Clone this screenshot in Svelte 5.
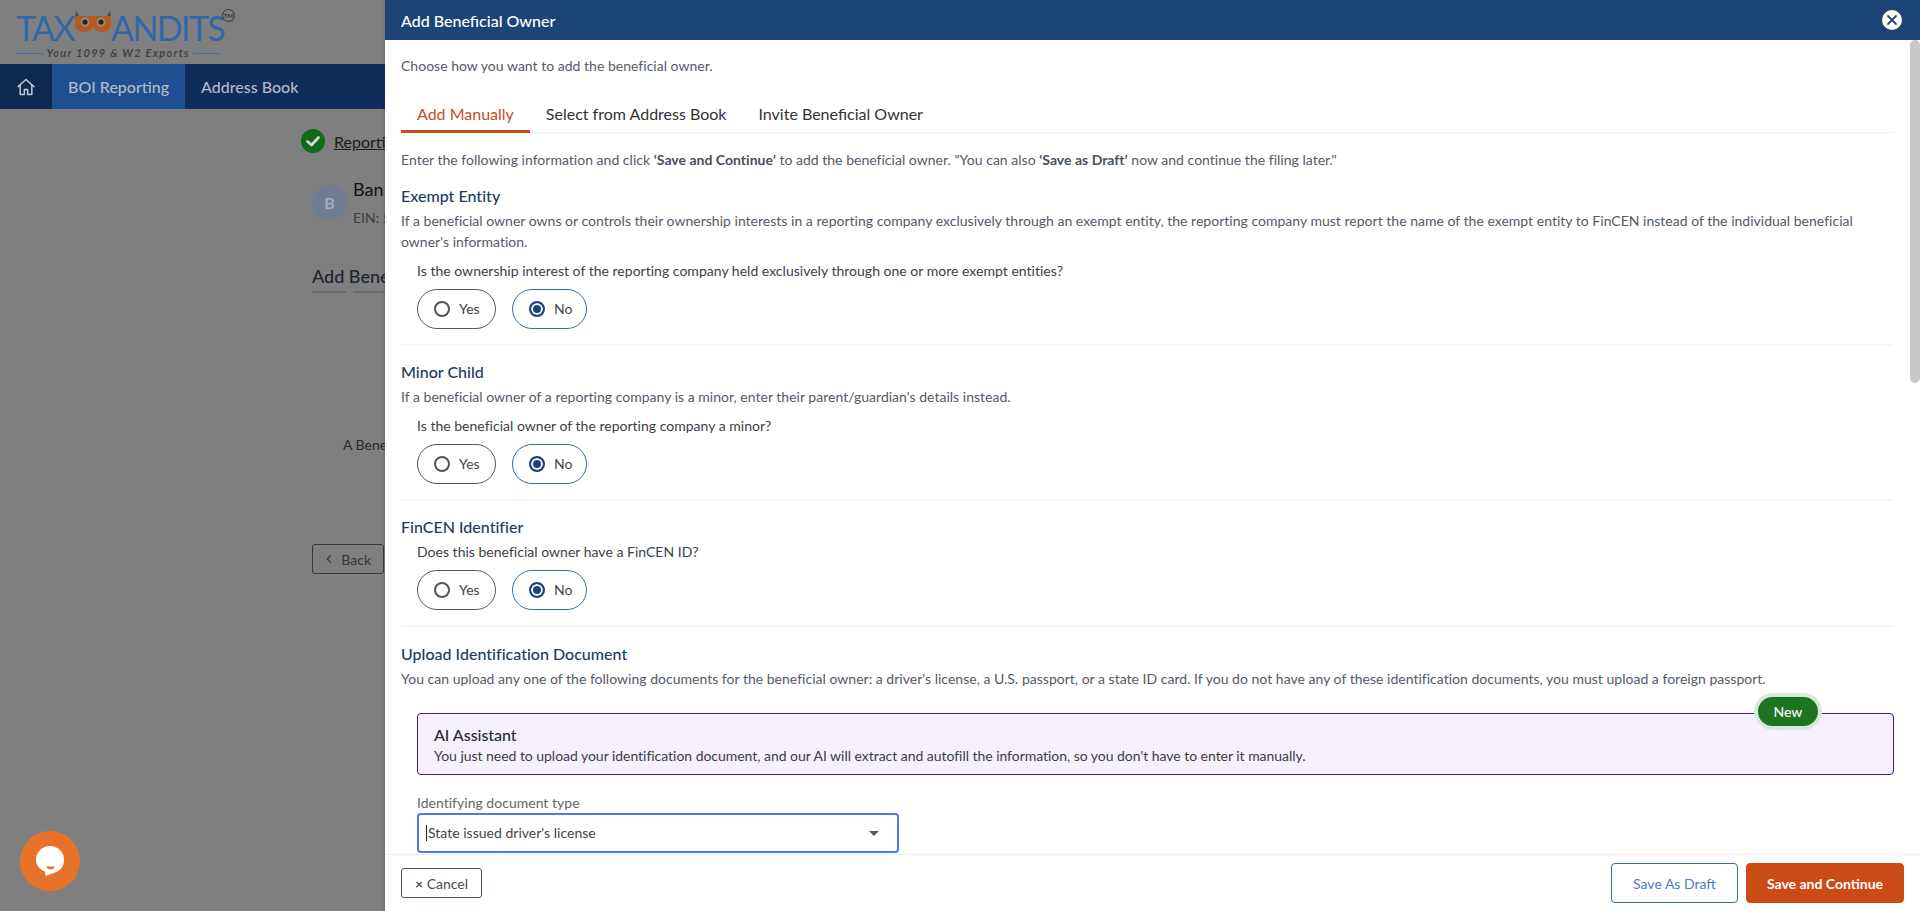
<script>
  const sections = [
    {
      title: 'Exempt Entity',
      desc: "If a beneficial owner owns or controls their ownership interests in a reporting company exclusively through an exempt entity, the reporting company must report the name of the exempt entity to FinCEN instead of the individual beneficial owner's information.",
      question: 'Is the ownership interest of the reporting company held exclusively through one or more exempt entities?'
    },
    {
      title: 'Minor Child',
      desc: "If a beneficial owner of a reporting company is a minor, enter their parent/guardian's details instead.",
      question: 'Is the beneficial owner of the reporting company a minor?'
    },
    {
      title: 'FinCEN Identifier',
      desc: '',
      question: 'Does this beneficial owner have a FinCEN ID?'
    }
  ];
</script>

<div class="page">
  <header class="brand">
    <div class="logo">
      <div class="wordmark">
        <span>TAX</span>
        <svg class="owl" viewBox="0 0 38 24" width="38" height="24">
          <path d="M2 1 L5 6 L1 7 Z M36 1 L33 6 L37 7 Z" fill="#4d4d4d" />
          <path d="M1 6 H37 V13 C37 19 33 22 28 22 C24 22 21 20 19 17 C17 20 14 22 10 22 C5 22 1 19 1 13 Z" fill="#b5591d" />
          <circle cx="11" cy="12" r="4.5" fill="#8a8a8a" />
          <circle cx="27" cy="12" r="4.5" fill="#8a8a8a" />
          <circle cx="11" cy="12" r="2.6" fill="#222" />
          <circle cx="27" cy="12" r="2.6" fill="#222" />
        </svg>
        <span>ANDITS</span>
        <span class="tm">TM</span>
      </div>
      <div class="tagline"><i></i><span>Your 1099 &amp; W2 Exports</span><i></i></div>
    </div>
  </header>

  <nav class="nav">
    <a class="home" href="#home" aria-label="Home">
      <svg viewBox="0 0 24 24" width="20" height="20" fill="none" stroke="#c3c9d2" stroke-width="1.8" stroke-linejoin="round" stroke-linecap="round">
        <path d="M2.500 11.500 12 3l9.500 8.500" />
        <path d="M5 9.500V21h5v-6h4v6h5V9.500" />
      </svg>
    </a>
    <a class="active" href="#boi">BOI Reporting</a>
    <a href="#address">Address Book</a>
  </nav>

  <main class="main">
    <div class="status">
      <span class="check">
        <svg viewBox="0 0 24 24" width="24" height="24" fill="none" stroke="#cfd6cf" stroke-width="2.8" stroke-linecap="round" stroke-linejoin="round"><path d="M6.500 12.500l4 3.500 7-7.500" /></svg>
      </span>
      <span class="status-link">Reporti</span>
    </div>
    <div class="company">
      <span class="avatar">B</span>
      <div>
        <div class="company-name">Ban</div>
        <div class="company-ein">EIN: 5</div>
      </div>
    </div>
    <h2 class="sub">Add Bene</h2>
    <div class="steps"><i></i><i></i></div>
    <p class="note">A Bene</p>
    <button class="back">
      <svg viewBox="0 0 10 14" width="8" height="12" fill="none" stroke="#33363d" stroke-width="1.5"><path d="M8 2 3 7l5 5" /></svg>
      Back
    </button>
  </main>

  <button class="chat" aria-label="Chat">
    <svg viewBox="0 0 30 32" width="30" height="32">
      <path d="M15 1a14 14 0 0 1 14 14c0 6.500-4 11-9 12.500L10.500 31l-.5-4.500C4.500 24.500 1 20 1 15A14 14 0 0 1 15 1z" fill="#fff" />
      <path d="M11 21.500h9c-.8 2-2.400 3-4.500 3s-3.700-1-4.500-3z" fill="#e8722a" />
    </svg>
  </button>

  <aside class="drawer">
    <div class="drawer-head">
      <span>Add Beneficial Owner</span>
      <button class="close" aria-label="Close">
        <svg viewBox="0 0 20 20" width="20" height="20" fill="none" stroke="#1d4477" stroke-width="1.8" stroke-linecap="round"><path d="M6 6l8 8M14 6l-8 8" /></svg>
      </button>
    </div>

    <div class="drawer-body">
      <span class="thumb"></span>
      <div class="form">
        <p class="intro">Choose how you want to add the beneficial owner.</p>
        <div class="tabs">
          <button class="tab on">Add Manually</button>
          <button class="tab">Select from Address Book</button>
          <button class="tab">Invite Beneficial Owner</button>
        </div>
        <p class="lead">Enter the following information and click <b>‘Save and Continue’</b> to add the beneficial owner. "You can also <b>‘Save as Draft’</b> now and continue the filing later."</p>

        {#each sections as s}
          <section class="section">
            <h3>{s.title}</h3>
            {#if s.desc}<p class="desc">{s.desc}</p>{/if}
            <p class="question">{s.question}</p>
            <div class="radios">
              <label class="pill yes"><span class="dot"></span>Yes</label>
              <label class="pill no"><span class="dot"></span>No</label>
            </div>
          </section>
        {/each}

        <section class="upload">
          <h3>Upload Identification Document</h3>
          <p class="desc">You can upload any one of the following documents for the beneficial owner: a driver's license, a U.S. passport, or a state ID card. If you do not have any of these identification documents, you must upload a foreign passport.</p>
          <div class="ai">
            <span class="new">New</span>
            <h4>AI Assistant</h4>
            <p>You just need to upload your identification document, and our AI will extract and autofill the information, so you don't have to enter it manually.</p>
          </div>
          <div class="field-label">Identifying document type</div>
          <div class="select"><span class="caret"></span>State issued driver's license<span class="arrow"></span></div>
        </section>
      </div>
    </div>

    <div class="drawer-foot">
      <button class="cancel"><b>×</b> Cancel</button>
      <div class="foot-right">
        <button class="draft">Save As Draft</button>
        <button class="save">Save and Continue</button>
      </div>
    </div>
  </aside>
</div>

<style>
  :global(body) {
    margin: 0;
    font-family: Lato, "Open Sans", sans-serif;
  }

  button {
    font-family: inherit;
    cursor: pointer;
  }

  p, h2, h3, h4 {
    margin: 0;
  }

  .page {
    position: relative;
    height: 911px;
    overflow: hidden;
    background: #7f7f7f;
  }

  /* page behind the drawer, already dimmed */
  .brand {
    height: 64px;
    box-sizing: border-box;
    padding: 10px 0 0 16px;
  }

  .wordmark {
    display: flex;
    align-items: flex-end;
    height: 33px;
    font: 400 34px/30px Lato, sans-serif;
    letter-spacing: -1.6px;
    color: #2f68aa;
    position: relative;
    width: 220px;
  }

  .owl {
    margin: 0 -1px 9px 0;
    flex: none;
  }

  .tm {
    position: absolute;
    left: 206px;
    top: -1px;
    width: 11px;
    height: 11px;
    border: 1px solid #333;
    border-radius: 50%;
    font: 700 6px/11px Lato, sans-serif;
    letter-spacing: 0;
    color: #333;
    text-align: center;
  }

  .tagline {
    display: flex;
    align-items: center;
    gap: 3px;
    width: 204px;
    margin-top: 3px;
    font: italic 700 11px/14px Lato, sans-serif;
    letter-spacing: 1.25px;
    color: #444;
    white-space: nowrap;
  }

  .tagline i {
    flex: 1;
    height: 1px;
    background: #3f72ad;
  }

  .nav {
    display: flex;
    height: 45px;
    background: #102c58;
  }

  .nav a {
    display: flex;
    align-items: center;
    padding: 0 16px;
    font-size: 16px;
    font-weight: 500;
    color: #b4bbc6;
    text-decoration: none;
    white-space: nowrap;
  }

  .nav .home {
    width: 52px;
    box-sizing: border-box;
    background: #0e294f;
    padding: 0 16px;
  }

  .nav .active {
    width: 133px;
    box-sizing: border-box;
    background: #1f4f90;
  }

  .main {
    width: 1296px;
    margin: 0 auto;
  }

  .status {
    display: flex;
    align-items: center;
    gap: 9px;
    margin: 20px 0 0 -11px;
  }

  .check {
    width: 24px;
    height: 24px;
    border-radius: 50%;
    background: #116a17;
  }

  .check svg {
    display: block;
  }

  .status-link {
    font-size: 16px;
    color: #1b1b1b;
    text-decoration: underline;
    white-space: nowrap;
  }

  .company {
    display: flex;
    align-items: center;
    gap: 6px;
    margin-top: 25px;
  }

  .avatar {
    width: 35px;
    height: 35px;
    border-radius: 50%;
    background: #6f7c92;
    color: #a4aec2;
    font-size: 16px;
    font-weight: 700;
    line-height: 35px;
    text-align: center;
  }

  .company-name {
    font-size: 18px;
    line-height: 22px;
    color: #111;
  }

  .company-ein {
    font-size: 14px;
    line-height: 18px;
    margin-top: 9px;
    color: #3e3e3e;
  }

  .sub {
    margin-top: 37px;
    font-size: 18px;
    line-height: 24px;
    font-weight: 500;
    color: #1c2230;
  }

  .steps {
    display: flex;
    gap: 7px;
    margin-top: 3px;
  }

  .steps i {
    width: 34px;
    height: 2px;
    background: #666c78;
  }

  .note {
    margin: 142px 0 0 31px;
    font-size: 14px;
    line-height: 20px;
    color: #262a33;
  }

  .back {
    display: flex;
    align-items: center;
    gap: 9px;
    width: 72px;
    height: 30px;
    margin-top: 89px;
    padding: 0 12px;
    background: none;
    border: 1px solid #33363d;
    border-radius: 3px;
    font-size: 14px;
    color: #33363d;
  }

  .chat {
    position: absolute;
    left: 20px;
    bottom: 20px;
    width: 60px;
    height: 60px;
    display: flex;
    align-items: center;
    justify-content: center;
    padding: 0;
    border: 0;
    border-radius: 50%;
    background: #e8722a;
  }

  /* drawer */
  .drawer {
    position: absolute;
    top: 0;
    right: 0;
    bottom: 0;
    width: 1535px;
    display: flex;
    flex-direction: column;
    background: #fff;
    box-shadow: -1px 0 2px rgba(0, 0, 0, .15);
  }

  .drawer-head {
    flex: none;
    height: 40px;
    display: flex;
    align-items: center;
    justify-content: space-between;
    padding: 0 18px 0 16px;
    background: #1d4477;
    color: #fff;
    font-size: 16px;
    font-weight: 500;
  }

  .close {
    width: 20px;
    height: 20px;
    padding: 0;
    border: 0;
    border-radius: 50%;
    background: #fff;
  }

  .close svg {
    display: block;
  }

  .drawer-body {
    position: relative;
    flex: 1;
    min-height: 0;
    overflow: hidden;
    padding: 0 26px 0 16px;
  }

  /* scrollbars don't show in the headless shot, so the thumb is drawn */
  .thumb {
    position: absolute;
    top: 0;
    right: 0;
    width: 10px;
    height: 343px;
    background: #c8c8c8;
    border-radius: 5px;
  }

  .form {
    padding-top: 16px;
    color: #555a68;
    font-size: 14px;
    line-height: 20px;
    letter-spacing: .015px;
  }

  .tabs {
    display: flex;
    margin-top: 20px;
    height: 37px;
    border-bottom: 1px solid #f1f1f1;
    box-sizing: border-box;
  }

  .tab {
    height: 37px;
    padding: 0 16px;
    background: none;
    border: 0;
    border-bottom: 3px solid transparent;
    font-size: 16px;
    color: #333;
  }

  .tab.on {
    color: #c24f1f;
    border-bottom-color: #c24f1f;
  }

  .lead {
    margin: 17px 0 1px;
  }

  .lead b {
    font-weight: 700;
    color: #4a4f5c;
  }

  .section {
    padding: 16px 0 15px;
    border-bottom: 2px solid #f5f5f5;
  }

  .section:first-of-type {
    padding-top: 15px;
  }

  .upload {
    padding-top: 17px;
  }

  h3 {
    font-size: 16px;
    line-height: 20px;
    padding-bottom: 2px;
    font-weight: 500;
    color: #23395f;
  }

  .desc {
    margin-top: 2px;
    line-height: 21px;
  }

  .question {
    margin: 9px 0 0 16px;
    color: #3e4049;
  }

  h3 + .question {
    margin-top: 3px;
  }

  .radios {
    display: flex;
    gap: 16px;
    margin: 8px 0 0 16px;
  }

  .pill {
    display: flex;
    align-items: center;
    gap: 9px;
    height: 40px;
    box-sizing: border-box;
    padding-left: 16px;
    border: 1px solid #55585f;
    border-radius: 20px;
    color: #444;
  }

  .pill.yes {
    width: 79px;
  }

  .pill.no {
    width: 75px;
    border-color: #2f6db5;
  }

  .dot {
    width: 16px;
    height: 16px;
    box-sizing: border-box;
    border: 2px solid #555;
    border-radius: 50%;
  }

  .no .dot {
    border-color: #1d4477;
    background: #1d4477;
    box-shadow: inset 0 0 0 2px #fff;
  }

  .ai {
    position: relative;
    margin: 24px 0 0 16px;
    padding: 10px 16px 8px;
    height: 62px;
    box-sizing: border-box;
    background: #f6f1fd;
    border: 1px solid #4a1a78;
    border-radius: 4px;
    color: #3a3d48;
    letter-spacing: -.035px;
  }

  .ai h4 {
    font-size: 16px;
    line-height: 22px;
    font-weight: 500;
    color: #262a36;
  }

  .new {
    position: absolute;
    top: -17px;
    right: 75px;
    width: 60px;
    height: 29px;
    border-radius: 15px;
    background: #1d761f;
    box-shadow: 0 0 0 4px #d8e8da;
    color: #fff;
    font-size: 14px;
    font-weight: 500;
    line-height: 29px;
    text-align: center;
  }

  .field-label {
    margin: 18px 0 0 16px;
    color: #666;
  }

  .select {
    display: flex;
    align-items: center;
    position: relative;
    width: 482px;
    height: 40px;
    box-sizing: border-box;
    margin-left: 16px;
    padding-left: 7px;
    border: 2px solid #4a7fdc;
    border-radius: 4px;
    color: #444;
  }

  .caret {
    width: 1px;
    height: 16px;
    background: #222;
    margin-right: 1px;
  }

  .arrow {
    position: absolute;
    right: 18px;
    top: 16px;
    border-left: 5px solid transparent;
    border-right: 5px solid transparent;
    border-top: 5px solid #555;
  }

  .drawer-foot {
    flex: none;
    height: 57px;
    box-sizing: border-box;
    display: flex;
    align-items: center;
    justify-content: space-between;
    padding: 0 16px;
    border-top: 1px solid #eee;
    background: #fff;
  }

  .foot-right {
    display: flex;
    gap: 8px;
  }

  .cancel {
    width: 81px;
    height: 30px;
    padding: 0;
    background: #fff;
    border: 1px solid #44546a;
    border-radius: 3px;
    font-size: 14px;
    color: #444c5c;
  }

  .draft, .save {
    height: 40px;
    padding: 0;
    border-radius: 4px;
    font-size: 14px;
  }

  .draft {
    width: 127px;
    background: #fff;
    border: 1px solid #2e6db4;
    color: #4a7cc4;
  }

  .save {
    width: 158px;
    background: #cb4b16;
    border: 1px solid #cb4b16;
    color: #fff;
    font-weight: 700;
  }
</style>
